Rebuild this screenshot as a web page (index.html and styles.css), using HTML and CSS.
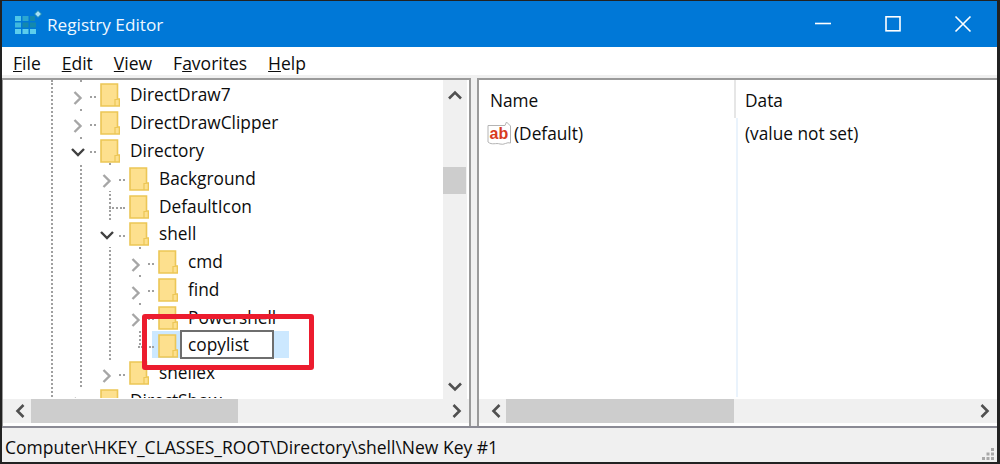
FILE: index.html
```html
<!DOCTYPE html>
<html lang="en">
<head>
    <meta charset="UTF-8">
    <meta name="viewport" content="width=device-width, initial-scale=1.0">
    <title>Registry Editor</title>
    <link rel="stylesheet" href="styles.css">
</head>
<body>
    <svg class="defs" width="0" height="0">
        <symbol id="folder" viewBox="0 0 20 24">
            <path d="M1 1H17.500V16H19.500V23H1Z" fill="#fde08e" stroke="#ecc656" stroke-width="1.600"/>
            <path d="M15 23V16.500H17.500" fill="none" stroke="#ecc656" stroke-width="1.200"/>
        </symbol>
        <symbol id="chev-right" viewBox="0 0 12 25">
            <path d="M2.500 9L8.500 15L2.500 21" fill="none" stroke="#a6a6a6" stroke-width="2.400"/>
        </symbol>
        <symbol id="chev-down" viewBox="0 0 18 25">
            <path d="M3 10L9 16L15 10" fill="none" stroke="#404040" stroke-width="2.400"/>
        </symbol>
    </svg>

    <div class="window">
        <header class="titlebar">
            <svg class="app-icon" width="30" height="28" viewBox="0 0 30 28">
                <rect x="1" y="6" width="6" height="5" fill="#4fc6e8"/><rect x="8.500" y="6" width="6" height="5" fill="#2ba6d0"/><rect x="16" y="6" width="5" height="5" fill="#1488ad"/>
                <rect x="1" y="12.500" width="6" height="5" fill="#3fb8de"/><rect x="8.500" y="12.500" width="6" height="5" fill="#1488ad"/><rect x="16" y="12.500" width="6" height="5" fill="#1488ad"/>
                <rect x="1" y="19" width="6" height="5" fill="#5ccdec"/><rect x="8.500" y="19" width="6" height="5" fill="#5ccdec"/><rect x="16" y="19" width="6" height="5" fill="#5ccdec"/>
                <path d="M24 0.500L27.500 4L24 7.500L20.500 4Z" fill="#a8e0f5" stroke="#1488ad" stroke-width="1"/>
            </svg>
            <span class="title">Registry Editor</span>
            <div class="win-buttons">
                <svg width="18" height="18" viewBox="0 0 18 18"><path d="M1 8.500H17" stroke="#fff" stroke-width="1.600"/></svg>
                <svg width="18" height="18" viewBox="0 0 18 18"><rect x="2" y="1.800" width="14" height="14" fill="none" stroke="#fff" stroke-width="1.600"/></svg>
                <svg width="18" height="18" viewBox="0 0 18 18"><path d="M1.500 1.500L16.500 16.500M16.500 1.500L1.500 16.500" stroke="#fff" stroke-width="1.600"/></svg>
            </div>
        </header>

        <nav class="menubar">
            <span><u>F</u>ile</span>
            <span><u>E</u>dit</span>
            <span><u>V</u>iew</span>
            <span>F<u>a</u>vorites</span>
            <span><u>H</u>elp</span>
        </nav>

        <main class="panes">
            <section class="pane tree-pane">
                <div class="pane-body">
                    <div class="tree">
                        <i class="guide g1"></i>
                        <i class="guide g2"></i>
                        <i class="guide g3"></i>
                        <i class="guide g4"></i>
                        <div class="row lvl0"><svg class="twisty"><use href="#chev-right"/></svg><i class="dots"></i><svg class="folder"><use href="#folder"/></svg><span class="label">DirectDraw7</span></div>
                        <div class="row lvl0"><svg class="twisty"><use href="#chev-right"/></svg><i class="dots"></i><svg class="folder"><use href="#folder"/></svg><span class="label">DirectDrawClipper</span></div>
                        <div class="row lvl0"><svg class="twisty open"><use href="#chev-down"/></svg><i class="dots"></i><svg class="folder"><use href="#folder"/></svg><span class="label">Directory</span></div>
                        <div class="row lvl1"><svg class="twisty"><use href="#chev-right"/></svg><i class="dots"></i><svg class="folder"><use href="#folder"/></svg><span class="label">Background</span></div>
                        <div class="row lvl1"><i class="twisty"></i><i class="dots long"></i><svg class="folder"><use href="#folder"/></svg><span class="label">DefaultIcon</span></div>
                        <div class="row lvl1"><svg class="twisty open"><use href="#chev-down"/></svg><i class="dots"></i><svg class="folder"><use href="#folder"/></svg><span class="label">shell</span></div>
                        <div class="row lvl2"><svg class="twisty"><use href="#chev-right"/></svg><i class="dots"></i><svg class="folder"><use href="#folder"/></svg><span class="label">cmd</span></div>
                        <div class="row lvl2"><svg class="twisty"><use href="#chev-right"/></svg><i class="dots"></i><svg class="folder"><use href="#folder"/></svg><span class="label">find</span></div>
                        <div class="row lvl2"><svg class="twisty"><use href="#chev-right"/></svg><i class="dots"></i><svg class="folder"><use href="#folder"/></svg><span class="label">Powershell</span></div>
                        <div class="row lvl2 editing"><i class="twisty"></i><i class="dots long"></i><svg class="folder"><use href="#folder"/></svg><span class="label edit-box">copylist</span></div>
                        <div class="row lvl1"><svg class="twisty"><use href="#chev-right"/></svg><i class="dots"></i><svg class="folder"><use href="#folder"/></svg><span class="label">shellex</span></div>
                        <div class="row lvl0"><svg class="twisty"><use href="#chev-right"/></svg><i class="dots"></i><svg class="folder"><use href="#folder"/></svg><span class="label">DirectShow</span></div>
                        <div class="callout"></div>
                    </div>
                    <div class="vscroll">
                        <svg width="18" height="12" viewBox="0 0 18 12"><path d="M3 9.500L9 3.500L15 9.500" fill="none" stroke="#505050" stroke-width="2.600"/></svg>
                        <div class="vtrack"><div class="vthumb"></div></div>
                        <svg width="18" height="12" viewBox="0 0 18 12"><path d="M3 2.500L9 8.500L15 2.500" fill="none" stroke="#505050" stroke-width="2.600"/></svg>
                    </div>
                </div>
                <div class="hscroll">
                    <svg width="12" height="18" viewBox="0 0 12 18"><path d="M9.500 3L3.500 9L9.500 15" fill="none" stroke="#505050" stroke-width="2.600"/></svg>
                    <div class="htrack"><div class="hthumb tree-thumb"></div></div>
                    <svg width="12" height="18" viewBox="0 0 12 18"><path d="M2.500 3L8.500 9L2.500 15" fill="none" stroke="#505050" stroke-width="2.600"/></svg>
                </div>
            </section>

            <section class="pane list-pane">
                <div class="pane-body list-body">
                    <i class="col-rule"></i>
                    <div class="list-head">
                        <span class="col-name">Name</span>
                        <span class="col-data">Data</span>
                    </div>
                    <div class="list-row">
                        <span class="col-name">
                            <svg class="ab-icon" width="25" height="25" viewBox="0 0 25 25">
                                <path d="M1 4.500H18L19.500 1L23.500 5V22C20 20.500 17 24.500 13 23C9 21.500 5 24.500 1 21Z" fill="#fff" stroke="#b4b4b4" stroke-width="1"/>
                                <text x="2.500" y="17.500" class="ab-text">ab</text>
                            </svg>
                            (Default)
                        </span>
                        <span class="col-data">(value not set)</span>
                    </div>
                </div>
                <div class="hscroll">
                    <svg width="12" height="18" viewBox="0 0 12 18"><path d="M9.500 3L3.500 9L9.500 15" fill="none" stroke="#505050" stroke-width="2.600"/></svg>
                    <div class="htrack"><div class="hthumb list-thumb"></div></div>
                    <svg width="12" height="18" viewBox="0 0 12 18"><path d="M2.500 3L8.500 9L2.500 15" fill="none" stroke="#505050" stroke-width="2.600"/></svg>
                </div>
            </section>
        </main>

        <footer class="statusbar">
            <span>Computer\HKEY_CLASSES_ROOT\Directory\shell\New Key #1</span>
            <svg class="grip" width="14" height="14" viewBox="0 0 14 14">
                <g fill="#a8a8a8">
                    <rect x="10" y="1" width="3" height="3"/>
                    <rect x="5.500" y="5.500" width="3" height="3"/><rect x="10" y="5.500" width="3" height="3"/>
                    <rect x="1" y="10" width="3" height="3"/><rect x="5.500" y="10" width="3" height="3"/><rect x="10" y="10" width="3" height="3"/>
                </g>
            </svg>
        </footer>
    </div>
</body>
</html>
```

FILE: styles.css
```css
* {
    margin: 0;
    padding: 0;
    box-sizing: border-box;
}

body {
    width: 1000px;
    height: 464px;
    overflow: hidden;
    background: #222;
    font-family: 'Open Sans', 'Noto Sans', sans-serif;
    font-size: 17.3px;
    color: #0c0c0c;
}

.defs {
    position: absolute;
}

.window {
    margin: 1px 3px 2px 2px;
    height: 461px;
    display: flex;
    flex-direction: column;
    background: #f0f0f0;
}

.titlebar {
    height: 46px;
    flex: none;
    background: #0078d7;
    color: #eef7ff;
    display: flex;
    align-items: center;
    padding-left: 12px;
}

.app-icon {
    flex: none;
}

.title {
    margin-left: 3px;
    font-size: 17.2px;
}

.win-buttons {
    margin-left: auto;
    display: flex;
    gap: 52px;
    padding-right: 25px;
}

.menubar {
    height: 28px;
    flex: none;
    background: #fff;
    display: flex;
    align-items: center;
    gap: 21px;
    padding: 3px 0 0 11px;
    font-size: 17.5px;
}

.panes {
    flex: 1;
    display: flex;
    gap: 6px;
    padding-top: 3px;
    border-bottom: 2px solid #8a8a94;
}

.pane {
    display: flex;
    flex-direction: column;
    background: #fff;
    border-top: 2px solid #9a9a9a;
    border-left: 1px solid #9a9a9a;
    border-right: 2px solid #9a9a9a;
    padding-bottom: 2px;
}

.tree-pane {
    width: 469px;
}

.list-pane {
    flex: 1;
    border-left-width: 2px;
    border-right: none;
}

.pane-body {
    flex: 1;
    display: flex;
    min-height: 0;
}

.tree {
    position: relative;
    flex: 1;
    overflow: hidden;
    height: 318px;
}

.row {
    height: 27.8px;
    display: flex;
    align-items: center;
    white-space: nowrap;
}

.lvl0 { padding-left: 65px; }
.lvl1 { padding-left: 94px; }
.lvl2 { padding-left: 123px; }

.twisty {
    flex: none;
    width: 12px;
    height: 25px;
    margin-left: 4px;
    margin-right: 6px;
    align-self: flex-start;
    margin-top: 3px;
}

svg.twisty {
    position: relative;
    background: #fff;
}

.twisty.open {
    width: 18px;
    margin-left: 1px;
    margin-right: 3px;
}

.dots {
    flex: none;
    width: 6px;
    margin-right: 4px;
    margin-top: 6px;
    border-top: 2px dotted #a0a0a0;
}

.dots.long {
    width: 16px;
    margin-left: -10px;
}

.folder {
    flex: none;
    width: 20px;
    height: 24px;
    margin-top: 3px;
}

.label {
    margin-left: 10px;
    position: relative;
    top: 1px;
}

.guide {
    position: absolute;
    width: 0;
    border-left: 2px dotted #a0a0a0;
}

.g1 { left: 48px; top: 0; height: 317px; }
.g2 { left: 77px; top: 0; height: 307px; }
.g3 { left: 106px; top: 83px; height: 200px; }
.g4 { left: 136px; top: 167px; height: 98px; }

.editing::before {
    content: "";
    position: absolute;
    left: 149px;
    width: 137px;
    height: 27px;
    background: #cce8ff;
}

.editing > * {
    position: relative;
}

.edit-box {
    top: 0;
    margin-left: 2px;
    width: 94px;
    height: 29px;
    padding-left: 6px;
    line-height: 25px;
    background: #fff;
    border: 2px solid #6e6e6e;
}

.callout {
    position: absolute;
    left: 139px;
    top: 234px;
    width: 172px;
    height: 56px;
    border: 5px solid #ec1c2e;
    border-radius: 3px;
}

.vscroll {
    flex: none;
    width: 24px;
    margin-right: 2px;
    background: #f0f0f0;
    display: flex;
    flex-direction: column;
    align-items: center;
    padding: 9px 0 6px;
}

.vtrack {
    flex: 1;
    width: 100%;
    padding-top: 66px;
}

.vthumb {
    width: 23px;
    height: 27px;
    background: #cdcdcd;
}

.hscroll {
    flex: none;
    height: 24px;
    background: #f0f0f0;
    display: flex;
    align-items: center;
    padding: 0 6px 0 11px;
    margin-bottom: 1px;
}

.htrack {
    flex: 1;
    height: 100%;
    padding: 0 5px;
}

.hthumb {
    height: 100%;
    background: #cdcdcd;
}

.tree-thumb { width: 207px; }
.list-thumb { width: 228px; margin-left: -1px; }

.list-body {
    flex-direction: column;
    position: relative;
    background: #fff;
}

.col-rule {
    position: absolute;
    left: 255px;
    top: 0;
    width: 2px;
    height: 38px;
    background: #e6e6e6;
}

.col-rule::after {
    content: "";
    position: absolute;
    left: 2px;
    top: 38px;
    width: 2px;
    height: 279px;
    background: #eaf3fc;
}

.list-head {
    height: 40px;
    display: flex;
    align-items: center;
    padding-left: 11px;
}

.list-row {
    display: flex;
    align-items: center;
    height: 26px;
    padding-left: 8px;
}

.col-name {
    width: 258px;
    display: flex;
    align-items: center;
    gap: 2px;
    flex: none;
}

.list-head .col-name {
    width: 255px;
}

.ab-icon {
    flex: none;
}

.ab-text {
    font-family: 'Liberation Sans', sans-serif;
    font-weight: bold;
    font-size: 16px;
    fill: #d83b1d;
}

.statusbar {
    flex: none;
    height: 34px;
    display: flex;
    align-items: center;
    justify-content: space-between;
    padding: 3px 2px 0 3px;
    font-size: 17.5px;
}

.grip {
    align-self: flex-end;
    margin-bottom: 1px;
}
```
